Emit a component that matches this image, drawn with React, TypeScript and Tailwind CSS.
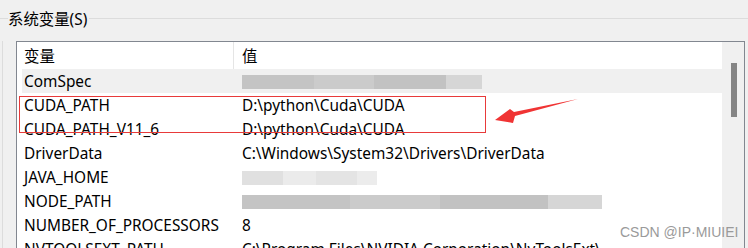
import React from 'react';

type Row = { name: string; value?: string; blur?: number; selected?: boolean };

const rows: Row[] = [
  { name: 'ComSpec', blur: 240, selected: true },
  { name: 'CUDA_PATH', value: 'D:\\python\\Cuda\\CUDA' },
  { name: 'CUDA_PATH_V11_6', value: 'D:\\python\\Cuda\\CUDA' },
  { name: 'DriverData', value: 'C:\\Windows\\System32\\Drivers\\DriverData' },
  { name: 'JAVA_HOME', blur: 135 },
  { name: 'NODE_PATH', blur: 360 },
  { name: 'NUMBER_OF_PROCESSORS', value: '8' },
  { name: 'NVTOOLSEXT_PATH', value: 'C:\\Program Files\\NVIDIA Corporation\\NvToolsExt\\' },
];

const font = { fontFamily: '"Noto Sans", "Noto Sans CJK SC", sans-serif' };

const Blurred: React.FC<{ width: number; light?: boolean }> = ({ width, light }) => (
  <div className="flex h-[14px] blur-[0.6px]" style={{ width }}>
    <div className={`h-full w-[30%] ${light ? 'bg-[#e0e0e0]' : 'bg-[#c4c4c4]'}`} />
    <div className={`h-full w-[25%] ${light ? 'bg-[#ebebeb]' : 'bg-[#cbcbcb]'}`} />
    <div className={`h-full w-[30%] ${light ? 'bg-[#e4e4e4]' : 'bg-[#c2c2c2]'}`} />
    <div className={`h-full w-[15%] ${light ? 'bg-[#ececec]' : 'bg-[#d6d6d6]'}`} />
  </div>
);

export default function App() {
  return (
    <div className="relative h-[248px] w-[748px] overflow-hidden bg-[#f0f0f0] text-[15.4px] text-black" style={font}>
      {/* group box frame */}
      <div className="flex h-[41px] items-start">
        <div className="mt-[18px] h-px w-[8px] bg-[#dcdcdc]" />
        <span className="mt-[8px] leading-[24px]">系统变量(S)</span>
        <div className="mt-[18px] ml-[2px] h-px flex-1 bg-[#dcdcdc]" />
      </div>
      <div className="flex">
        <div className="ml-[2px] w-px self-stretch bg-[#dcdcdc]" />
        <div className="ml-[13px] flex h-[220px] w-[729px] border border-[#828790] bg-white">
          <div className="flex flex-1 flex-col overflow-hidden">
            <div className="flex h-[27px] shrink-0 items-center bg-white">
              <div className="w-[217px] border-r border-[#e5e5e5] pt-[3px] pl-[7px] leading-[24px]">变量</div>
              <div className="pt-[3px] pl-[8px] leading-[24px]">值</div>
            </div>
            {rows.map((r) => (
              <div key={r.name} className="flex h-[24px] shrink-0 items-center pl-[5px]">
                <div className={`flex h-full flex-1 items-center pt-[2px] ${r.selected ? 'bg-[#f0f0f0]' : ''}`}>
                  <div className="w-[217px] shrink-0 pl-[2px] whitespace-nowrap">{r.name}</div>
                  <div className="pl-[3px] whitespace-nowrap">
                    {r.value ?? <Blurred width={r.blur ?? 100} light={r.name === 'JAVA_HOME'} />}
                  </div>
                </div>
              </div>
            ))}
          </div>
          <div className="flex w-[22px] justify-center border-l border-[#f0f0f0] bg-[#f0f0f0] pt-[21px]">
            <div className="h-[54px] w-[6px] bg-[#858585]" />
          </div>
        </div>
      </div>

      {/* annotation: red box + arrow */}
      <div className="absolute top-[96px] left-[19px] h-[37px] w-[467px] border border-[#e83a3a]" />
      <svg className="absolute top-0 left-0" width="748" height="248">
        <polygon points="578,99 514,112 510,109 495,120 513,123 515,116" fill="#f03434" />
      </svg>

      {/* watermark */}
      <div
        className="absolute top-[224px] left-[620px] text-[14px] leading-[16px] text-[#9a9a9a]"
        style={{ fontFamily: '"Liberation Sans", Arial, sans-serif' }}
      >
        CSDN @IP·MIUIEI
      </div>
    </div>
  );
}
